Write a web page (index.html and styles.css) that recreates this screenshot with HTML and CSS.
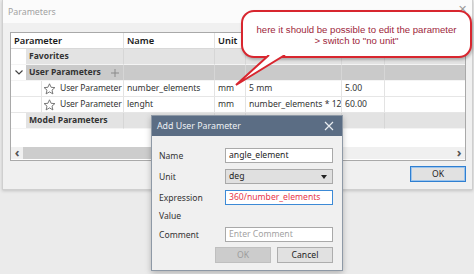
FILE: index.html
```html
<!DOCTYPE html>
<html lang="en">
<head>
    <meta charset="UTF-8">
    <title>Parameters</title>
    <link rel="stylesheet" href="styles.css">
</head>
<body>
    <div class="window">
        <div class="titlebar">
            <span class="title">Parameters</span>
            <span class="close">&#x2715;</span>
        </div>
        <div class="content">
            <div class="table">
                <div class="grid">
                    <div class="row head">
                        <div class="cell">Parameter</div>
                        <div class="cell">Name</div>
                        <div class="cell">Unit</div>
                        <div class="cell"></div>
                        <div class="cell"></div>
                        <div class="cell"></div>
                    </div>
                    <div class="row group light">
                        <div class="cell first"><span class="twisty"></span><span class="label">Favorites</span></div>
                        <div class="cell"></div><div class="cell"></div><div class="cell"></div><div class="cell"></div><div class="cell"></div>
                    </div>
                    <div class="row group dark">
                        <div class="cell first">
                            <span class="twisty">
                                <svg width="8" height="5" viewBox="0 0 8 5"><path d="M0.5 0.5 L4 4 L7.5 0.5" fill="none" stroke="#444" stroke-width="1.2"/></svg>
                            </span>
                            <span class="label">User Parameters
                                <svg class="plus" width="8" height="8" viewBox="0 0 8 8"><path d="M4 0 V8 M0 4 H8" stroke="#8a8a8a" stroke-width="1"/></svg>
                            </span>
                        </div>
                        <div class="cell"></div><div class="cell"></div><div class="cell"></div><div class="cell"></div><div class="cell"></div>
                    </div>
                    <div class="row item">
                        <div class="cell first">
                            <span class="twisty wide"></span>
                            <span class="leaf">
                                <svg class="star" width="13" height="12" viewBox="0 0 13 12"><path d="M6.5 0.8 L8.1 4.3 L11.9 4.6 L9 7.1 L9.9 10.9 L6.5 8.9 L3.1 10.9 L4 7.1 L1.1 4.6 L4.9 4.3 Z" fill="#fff" stroke="#6a6a6a" stroke-width="0.9" stroke-linejoin="round"/></svg>
                                User Parameter
                            </span>
                        </div>
                        <div class="cell">number_elements</div>
                        <div class="cell">mm</div>
                        <div class="cell">5 mm</div>
                        <div class="cell">5.00</div>
                        <div class="cell"></div>
                    </div>
                    <div class="row item">
                        <div class="cell first">
                            <span class="twisty wide"></span>
                            <span class="leaf">
                                <svg class="star" width="13" height="12" viewBox="0 0 13 12"><path d="M6.5 0.8 L8.1 4.3 L11.9 4.6 L9 7.1 L9.9 10.9 L6.5 8.9 L3.1 10.9 L4 7.1 L1.1 4.6 L4.9 4.3 Z" fill="#fff" stroke="#6a6a6a" stroke-width="0.9" stroke-linejoin="round"/></svg>
                                User Parameter
                            </span>
                        </div>
                        <div class="cell">lenght</div>
                        <div class="cell">mm</div>
                        <div class="cell">number_elements * 12</div>
                        <div class="cell">60.00</div>
                        <div class="cell"></div>
                    </div>
                    <div class="row group light">
                        <div class="cell first"><span class="twisty"></span><span class="label">Model Parameters</span></div>
                        <div class="cell"></div><div class="cell"></div><div class="cell"></div><div class="cell"></div><div class="cell"></div>
                    </div>
                </div>
                <div class="scrollbar">
                    <span class="arrow">&#x2039;</span>
                    <span class="track"><span class="thumb"></span></span>
                    <span class="arrow">&#x203A;</span>
                </div>
            </div>
            <div class="actions">
                <button class="btn default">OK</button>
            </div>
        </div>
    </div>

    <!-- callout over the table -->
    <div class="callout">
        here it should be possible to edit the parameter<br>
        &gt; switch to "no unit"
    </div>
    <svg class="tail" width="60" height="32" viewBox="0 0 60 32">
        <path d="M34 0 L1 30 L50 0" fill="#fff" stroke="#d8262f" stroke-width="2" stroke-linejoin="miter"/>
    </svg>

    <div class="dialog">
        <div class="dialog-title">
            <span>Add User Parameter</span>
            <svg width="10" height="10" viewBox="0 0 10 10"><path d="M1 1 L9 9 M9 1 L1 9" stroke="#e8ecf0" stroke-width="1.2"/></svg>
        </div>
        <div class="dialog-body">
            <div class="form">
                <label>Name</label>
                <div class="field">angle_element</div>
                <label>Unit</label>
                <div class="field select">deg <span class="caret"></span></div>
                <label>Expression</label>
                <div class="field focus">360/number_elements</div>
                <label>Value</label>
                <div></div>
                <label>Comment</label>
                <div class="field placeholder">Enter Comment</div>
            </div>
            <div class="dialog-actions">
                <button class="btn disabled">OK</button>
                <button class="btn">Cancel</button>
            </div>
        </div>
    </div>
</body>
</html>
```

FILE: styles.css
```css
body {
    margin: 0;
    width: 474px;
    height: 274px;
    overflow: hidden;
    background: #ebebeb;
    font-family: "Noto Sans", "Open Sans", sans-serif;
    font-size: 8.6px;
    color: #222;
    position: relative;
}
.window {
    margin-left: 2px;
    width: 471px;
    height: 190px;
    box-sizing: border-box;
    border: 1px solid #cfcfcf;
    border-top: none;
    background: #f0f0f0;
    box-shadow: 0 1px 3px rgba(0, 0, 0, 0.18);
}
.titlebar {
    height: 23px;
    background: #fbfbfb;
    display: flex;
    align-items: center;
    justify-content: space-between;
    padding: 0 5px;
}
.title {
    color: #a2a2a2;
    font-size: 8.8px;
}
.close {
    color: #9a9a9a;
    font-size: 11px;
    margin-top: -6px;
}
.content {
    padding: 9px 6px 0 7px;
}
.table {
    width: 456px;
    height: 129px;
    box-sizing: border-box;
    border: 1px solid #a9a9a9;
    background: #fff;
    display: flex;
    flex-direction: column;
    justify-content: space-between;
}
.row {
    display: grid;
    grid-template-columns: 113px 91px 31px 96px 43px 80px;
    height: 16px;
}
.cell {
    box-sizing: border-box;
    border-right: 1px solid #e3e3e3;
    border-bottom: 1px solid #e6e6e6;
    padding-left: 3px;
    line-height: 15px;
    white-space: nowrap;
    overflow: hidden;
}
.cell:last-child {
    border-right: none;
}
.head .cell {
    font-size: 9.3px;
    font-weight: 600;
    color: #1a1a1a;
    padding-left: 3px;
    border-bottom-color: #d8d8d8;
}
.cell.first {
    display: flex;
    padding-left: 0;
}
.twisty {
    width: 15px;
    flex: none;
    display: flex;
    align-items: center;
    justify-content: center;
    background: #fff;
}
.twisty.wide {
    width: 30px;
}
.label {
    flex: 1;
    font-weight: 700;
    color: #333;
    padding-left: 3px;
    display: flex;
    align-items: center;
}
.plus {
    margin-left: 10px;
}
.light .label,
.light .cell:not(.first) {
    background: #e3e3e3;
}
.dark .label,
.dark .cell:not(.first) {
    background: #cacaca;
}
.group .cell {
    border-bottom-color: #f4f4f4;
    border-right-color: #d6d6d6;
}
.leaf {
    flex: 1;
    display: flex;
    align-items: center;
    border-left: 1px solid #e3e3e3;
    padding-left: 1px;
    color: #333;
    letter-spacing: -0.15px;
}
.star {
    margin-right: 4px;
    flex: none;
}
.item .cell {
    color: #333;
}
.scrollbar {
    height: 12px;
    margin-bottom: 1px;
    display: flex;
    background: #f0f0f0;
}
.arrow {
    width: 12px;
    text-align: center;
    font-size: 13px;
    line-height: 10px;
    font-weight: 700;
    color: #555;
}
.track {
    flex: 1;
    display: flex;
}
.thumb {
    width: 280px;
    background: #cdcdcd;
}
.actions {
    display: flex;
    justify-content: flex-end;
    padding-top: 5px;
}
.btn {
    font-family: "Noto Sans", "Open Sans", sans-serif;
    font-size: 8.6px;
    height: 16px;
    padding: 0;
    box-sizing: border-box;
    border: 1px solid #adadad;
    background: #e1e1e1;
    color: #222;
}
.actions .btn {
    width: 56px;
    height: 16px;
}
.btn.default {
    border: 1px solid #2f7fd1;
    box-shadow: inset 0 0 0 1px #9cc4ec;
}

/* callout */
.callout {
    position: absolute;
    left: 241px;
    top: 10px;
    width: 231px;
    height: 48px;
    box-sizing: border-box;
    border: 2px solid #d8262f;
    border-radius: 13px;
    background: #fff;
    box-shadow: 1px 2px 3px rgba(0, 0, 0, 0.25);
    font-family: "Liberation Sans", Arial, sans-serif;
    font-size: 9.6px;
    line-height: 11px;
    color: #9e1f3b;
    text-align: center;
    padding-top: 12px;
}
.tail {
    position: absolute;
    left: 235px;
    top: 55px;
}

/* dialog */
.dialog {
    position: absolute;
    left: 151px;
    top: 115px;
    width: 192px;
    height: 156px;
    box-sizing: border-box;
    border: 1px solid #8e99a6;
    background: #f0f0f0;
    box-shadow: 0 2px 6px rgba(0, 0, 0, 0.25);
}
.dialog-title {
    height: 20px;
    background: #5b6d84;
    color: #eef1f4;
    font-size: 8.8px;
    display: flex;
    align-items: center;
    justify-content: space-between;
    padding: 0 8px 0 5px;
}
.dialog-body {
    padding: 12px 9px 0 7px;
}
.form {
    display: grid;
    grid-template-columns: 66px 1fr;
    grid-template-rows: 15px 15px 15px 10px 15px;
    row-gap: 6px;
    align-items: center;
}
.form label {
    color: #333;
}
.field {
    height: 15px;
    box-sizing: border-box;
    border: 1px solid #a9a9a9;
    background: #fff;
    padding-left: 3px;
    line-height: 13px;
    color: #222;
}
.select {
    background: #e0e0e0;
    position: relative;
}
.caret {
    position: absolute;
    right: 5px;
    top: 5px;
    border-left: 3px solid transparent;
    border-right: 3px solid transparent;
    border-top: 4px solid #222;
}
.focus {
    border-color: #3c8ad6;
    color: #e8354a;
}
.placeholder {
    color: #a2a2a2;
}
.dialog-actions {
    display: flex;
    justify-content: flex-end;
    gap: 6px;
    margin-top: 5px;
}
.dialog-actions .btn {
    width: 56px;
    height: 16px;
}
.btn.disabled {
    background: #cccccc;
    border-color: #bfbfbf;
    color: #9c9c9c;
}
```
